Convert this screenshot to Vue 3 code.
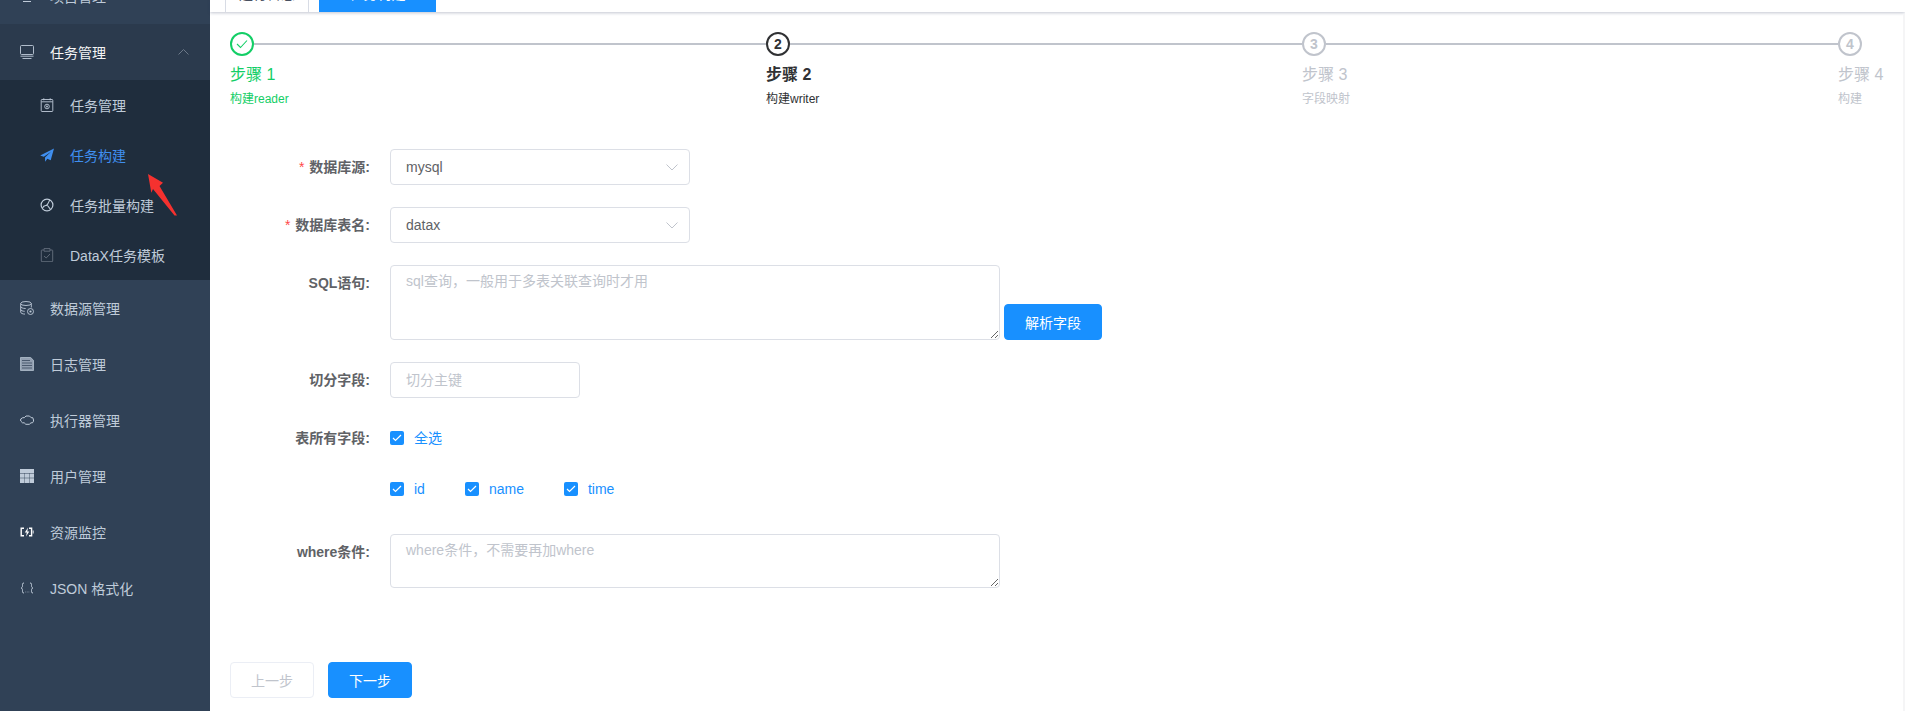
<script setup>
const steps = [
  { title: '步骤 1', desc: '构建reader', state: 'done' },
  { title: '步骤 2', desc: '构建writer', state: 'now' },
  { title: '步骤 3', desc: '字段映射', state: 'wait', n: 3 },
  { title: '步骤 4', desc: '构建', state: 'wait', n: 4 }
]
const mainMenu = [
  { name: '数据源管理', icon: 'db' },
  { name: '日志管理', icon: 'log' },
  { name: '执行器管理', icon: 'exec' },
  { name: '用户管理', icon: 'table' },
  { name: '资源监控', icon: 'battery' },
  { name: 'JSON 格式化', icon: 'json' }
]
const subMenu = [
  { name: '任务管理', icon: 'cal' },
  { name: '任务构建', icon: 'plane', active: true },
  { name: '任务批量构建', icon: 'dash' },
  { name: 'DataX任务模板', icon: 'clip' }
]
const fields = ['id', 'name', 'time']
</script>

<template>
  <div class="page">
    <aside class="side">
      <div class="item clipped">
        <svg class="ico" viewBox="0 0 14 14"><path d="M1 1h12v8H1zM3 12.500h8" fill="none" stroke="currentColor" /></svg>
        <span>项目管理</span>
      </div>
      <div class="item open">
        <svg class="ico" viewBox="0 0 14 14"><path d="M1.500 .5h11a1 1 0 0 1 1 1v7a1 1 0 0 1-1 1h-11a1 1 0 0 1-1-1v-7a1 1 0 0 1 1-1zM.5 11.200h13M2.500 13.500h9" fill="none" stroke="currentColor" stroke-width=".9" /></svg>
        <span>任务管理</span>
        <svg class="caret" viewBox="0 0 11 6"><path d="M.5 5.500l5-5 5 5" fill="none" stroke="currentColor" /></svg>
      </div>
      <div class="sub">
        <div v-for="s in subMenu" :key="s.name" class="sub-item" :class="{ active: s.active, dim: s.icon === 'clip' }">
          <svg class="ico" viewBox="0 0 14 14">
            <template v-if="s.icon === 'cal'">
              <path d="M2 1.500h10a.8.8 0 0 1 .8.8v10.400a.8.8 0 0 1-.8.8H2a.8.8 0 0 1-.8-.8V2.300a.8.8 0 0 1 .8-.8zM1.500 3.800h11M3.800 .3v2M10.200 .3v2" fill="none" stroke="currentColor" stroke-width=".9" />
              <circle cx="7" cy="8.500" r="2.300" fill="none" stroke="currentColor" stroke-width=".9" />
              <circle cx="7" cy="8.500" r=".9" fill="currentColor" />
            </template>
            <path v-else-if="s.icon === 'plane'" d="M14 .5L.2 7.500l3.600 1.300L11 3.800 5 9.500l.1 4.200 2.200-3 3.400 1.500z" fill="currentColor" />
            <template v-else-if="s.icon === 'dash'">
              <circle cx="7" cy="7" r="5.900" fill="none" stroke="currentColor" stroke-width="1.200" />
              <path d="M2.500 10C4 6.500 6 8 7 7s2-3.500 2.800-5.200M7.500 7.500l2.800 3.600" fill="none" stroke="currentColor" stroke-width="1.100" />
            </template>
            <template v-else>
              <path d="M3.800 2H2a.7.7 0 0 0-.7.7v10.300a.7.7 0 0 0 .7.7h10a.7.7 0 0 0 .7-.7V2.700A.7.7 0 0 0 12 2h-1.800M4 .6h6v2.600H4zM4 8l2.200 2 3.800-4" fill="none" stroke="currentColor" stroke-width=".9" />
            </template>
          </svg>
          <span>{{ s.name }}</span>
        </div>
      </div>
      <div v-for="m in mainMenu" :key="m.name" class="item">
        <svg class="ico" :class="{ bright: m.icon === 'battery' }" viewBox="0 0 14 14">
          <template v-if="m.icon === 'db'">
            <ellipse cx="6" cy="2.500" rx="5.300" ry="2" fill="none" stroke="currentColor" stroke-width=".9" />
            <path d="M.7 2.500v8.700c0 1 2 1.900 4.300 1.900M.7 5.500c0 1 2 2 5 2M.7 8.500c0 1 2 1.800 4 1.800M11.300 2.500v4" fill="none" stroke="currentColor" stroke-width=".9" />
            <circle cx="10.500" cy="10.500" r="3" fill="none" stroke="currentColor" stroke-width=".9" />
            <circle cx="10.500" cy="10.500" r="1.100" fill="currentColor" />
          </template>
          <template v-else-if="m.icon === 'log'">
            <path d="M.5 .5h10.200l2.800 2.800v10.200H.5z" fill="#93a0b2" stroke="currentColor" stroke-width=".7" />
            <path d="M2 3.500h8M2 6h10M2 8.500h10M2 11h10" stroke="#4b5a6f" fill="none" />
          </template>
          <path v-else-if="m.icon === 'exec'" d="M.7 6l2-1.300h1.600L6 3h3.500l1.600 1.700h1.700l.7 2.300v1.200l-1 1.600H11l-1.700 1.500H5.800L4.200 9.800H2.500L.7 8z" fill="none" stroke="currentColor" stroke-width="1" />
          <template v-else-if="m.icon === 'table'">
            <path d="M0 0h14v4H0z" fill="currentColor" />
            <path d="M0 4.500h4.500v4.300H0zM4.900 4.500h4.200v4.300H4.900zM9.500 4.500H14v4.300H9.500zM0 9.200h4.500V14H0zM4.900 9.200h4.200V14H4.900zM9.500 9.200H14V14H9.500z" fill="currentColor" />
          </template>
          <template v-else-if="m.icon === 'battery'">
            <path d="M4 3.300H1.200v7.400H4M9 3.300h2.600v7.400H9" fill="none" stroke="currentColor" stroke-width="1.400" />
            <path d="M12.600 5.500H14v3h-1.400z" fill="currentColor" opacity=".6" />
            <path d="M8 2.500L4.800 7.500h2l-.8 4 3.300-5h-2z" fill="currentColor" />
          </template>
          <template v-else>
            <path d="M4 2c-2 0-1.500 1.300-1.500 2.700S2 6.800 1 7c1 .2 1.500 1 1.500 2.300S2 12 4 12M10 2c2 0 1.500 1.300 1.500 2.700s.5 2.100 1.500 2.300c-1 .2-1.500 1-1.500 2.300s-.5 2.700 1.500 2.700" fill="none" stroke="currentColor" />
            <path d="M5.200 11h.9M6.800 11h.9M8.400 11h.9" stroke="currentColor" opacity=".5" />
          </template>
        </svg>
        <span>{{ m.name }}</span>
      </div>
    </aside>

    <main class="main">
      <div class="tags">
        <span class="tag">运行日志</span>
        <span class="tag on">任务构建</span>
      </div>

      <div class="content">
        <div class="steps">
          <div v-for="s in steps" :key="s.title" class="step" :class="s.state">
            <div class="head">
              <span class="dot">
                <svg v-if="s.state === 'done'" class="tick" viewBox="0 0 12 10"><path d="M1 5l3.500 3.500L11 1.500" fill="none" stroke="currentColor" stroke-width="1.100" /></svg>
                <template v-else>{{ s.n || 2 }}</template>
              </span>
              <span class="line"></span>
            </div>
            <div class="title">{{ s.title }}</div>
            <div class="desc">{{ s.desc }}</div>
          </div>
        </div>

        <form class="form" @submit.prevent>
          <div class="row">
            <label class="lab"><i>*</i>数据库源:</label>
            <div class="select">mysql<svg viewBox="0 0 12 7"><path d="M.5 .5L6 6l5.500-5.500" fill="none" stroke="currentColor" /></svg></div>
          </div>
          <div class="row">
            <label class="lab"><i>*</i>数据库表名:</label>
            <div class="select">datax<svg viewBox="0 0 12 7"><path d="M.5 .5L6 6l5.500-5.500" fill="none" stroke="currentColor" /></svg></div>
          </div>
          <div class="row bottom">
            <label class="lab top">SQL语句:</label>
            <textarea class="area sql" placeholder="sql查询，一般用于多表关联查询时才用"></textarea>
            <button type="button" class="btn primary parse">解析字段</button>
          </div>
          <div class="row">
            <label class="lab">切分字段:</label>
            <input class="input" placeholder="切分主键" />
          </div>
          <div class="row check-row">
            <label class="lab">表所有字段:</label>
            <span class="check"><b><svg viewBox="0 0 10 8"><path d="M1 4l2.500 2.500L9 1" fill="none" stroke="#fff" stroke-width="1.200" /></svg></b>全选</span>
          </div>
          <div class="row group">
            <span v-for="f in fields" :key="f" class="check"><b><svg viewBox="0 0 10 8"><path d="M1 4l2.500 2.500L9 1" fill="none" stroke="#fff" stroke-width="1.200" /></svg></b>{{ f }}</span>
          </div>
          <div class="row where">
            <label class="lab top">where条件:</label>
            <textarea class="area whe" placeholder="where条件，不需要再加where"></textarea>
          </div>
        </form>

        <div class="actions">
          <button type="button" class="btn off">上一步</button>
          <button type="button" class="btn primary">下一步</button>
        </div>
      </div>
    </main>

    <svg class="arrow" viewBox="0 0 29 42"><path d="M0 0L15 8.700 11.500 12 29 41.500 26.500 41.500 5 15 3.300 18.700z" fill="#f5312f" /></svg>
    <span class="edge"></span>
  </div>
</template>

<style scoped>
.page {
  display: flex;
  width: 1905px;
  height: 711px;
  overflow: hidden;
  position: relative;
  font-family: "Liberation Sans", "Noto Sans CJK SC", sans-serif;
  font-size: 14px;
  background: #fff;
}
.side {
  width: 210px;
  flex: none;
  background: #304156;
  color: #bfcbd9;
}
.item {
  height: 56px;
  display: flex;
  align-items: center;
  padding-left: 20px;
  position: relative;
}
.item .ico,
.sub-item .ico {
  width: 14px;
  height: 14px;
  margin-right: 16px;
  flex: none;
}
.item .ico.bright {
  color: #fff;
}
.clipped {
  margin-top: -32px;
}
.open {
  background: #2b3a4d;
  color: #f4f4f5;
}
.open .ico {
  color: #bfcbd9;
}
.caret {
  position: absolute;
  right: 21px;
  top: 25px;
  width: 11px;
  height: 6px;
  color: #6c7888;
}
.sub {
  background: #1f2d3d;
}
.sub-item {
  height: 50px;
  display: flex;
  align-items: center;
  padding-left: 40px;
}
.sub-item.dim .ico {
  color: #66717f;
}
.sub-item.active {
  color: #3f8ff0;
}
.main {
  flex: 1;
  min-width: 0;
  display: flex;
  flex-direction: column;
}
.tags {
  height: 12px;
  flex: none;
  display: flex;
  align-items: flex-end;
  padding-left: 15px;
  gap: 10px;
  box-shadow: 0 1px 3px rgba(40, 50, 90, 0.28);
  overflow: hidden;
}
.tag {
  box-sizing: border-box;
  width: 84px;
  height: 36px;
  border: 1px solid #d8dce5;
  border-bottom: 0;
  color: #495060;
  font-size: 14px;
  line-height: 34px;
  text-align: center;
  flex: none;
}
.tag.on {
  width: 117px;
  background: #1890ff;
  border-color: #1890ff;
  color: #fff;
}
.content {
  padding: 20px 20px 0;
  flex: 1;
}
.steps {
  display: flex;
  width: 1655px;
}
.step {
  flex: 0 0 536px;
  color: #c0c4cc;
}
.step:last-child {
  flex: 0 0 auto;
}
.step.done {
  color: #13ce66;
}
.step.now {
  color: #303133;
}
.head {
  display: flex;
  align-items: center;
  height: 24px;
}
.dot {
  box-sizing: border-box;
  width: 24px;
  height: 24px;
  border: 2px solid currentColor;
  border-radius: 50%;
  flex: none;
  display: flex;
  align-items: center;
  justify-content: center;
  font-size: 14px;
  font-weight: 700;
  line-height: 1;
}
.tick {
  width: 12px;
  height: 10px;
}
.line {
  flex: 1;
  height: 2px;
  background: #c0c4cc;
}
.step:last-child .line {
  display: none;
}
.title {
  margin-top: 7px;
  font-size: 16px;
  line-height: 24px;
}
.now .title {
  font-weight: 700;
}
.desc {
  margin-top: 2px;
  font-size: 12px;
  line-height: 20px;
}
.form {
  margin-top: 40px;
}
.row {
  display: flex;
  align-items: center;
  margin-bottom: 22px;
  color: #606266;
}
.row.bottom {
  align-items: flex-end;
}
.lab {
  box-sizing: border-box;
  width: 160px;
  padding-right: 20px;
  text-align: right;
  font-weight: 700;
  line-height: 36px;
  flex: none;
  align-self: flex-start;
  color: #606266;
  white-space: nowrap;
}
.lab i {
  color: #ff4949;
  font-style: normal;
  font-weight: 400;
  margin-right: 5px;
}
.select {
  box-sizing: border-box;
  width: 300px;
  height: 36px;
  border: 1px solid #dcdfe6;
  border-radius: 4px;
  padding-left: 15px;
  line-height: 34px;
  position: relative;
}
.select svg {
  position: absolute;
  right: 11px;
  top: 14px;
  width: 12px;
  height: 7px;
  color: #c0c4cc;
}
.area,
.input {
  box-sizing: border-box;
  border: 1px solid #dcdfe6;
  border-radius: 4px;
  padding: 5px 15px;
  font: inherit;
  color: #606266;
  outline: 0;
  display: block;
  background: #fff;
}
.area {
  width: 610px;
  line-height: 20px;
}
.sql {
  height: 75px;
}
.whe {
  height: 54px;
}
.input {
  width: 190px;
  height: 36px;
}
.area::placeholder,
.input::placeholder {
  color: #c0c4cc;
  opacity: 1;
}
.btn {
  box-sizing: border-box;
  height: 36px;
  width: 84px;
  border-radius: 4px;
  border: 1px solid #1890ff;
  background: #1890ff;
  color: #fff;
  font: inherit;
  padding: 0;
  flex: none;
}
.parse {
  width: 98px;
  margin-left: 4px;
}
.btn.off {
  background: #fff;
  border-color: #ebeef5;
  color: #c0c4cc;
}
.check {
  display: inline-flex;
  align-items: center;
  color: #1890ff;
  line-height: 36px;
}
.check b {
  width: 14px;
  height: 14px;
  border-radius: 2px;
  background: #1890ff;
  margin-right: 10px;
  display: flex;
  align-items: center;
  justify-content: center;
}
.check svg {
  width: 10px;
  height: 8px;
}
.check-row {
  margin-bottom: 15px;
}
.group {
  padding-left: 160px;
  margin-bottom: 27px;
  gap: 40px;
}
.where {
  margin-bottom: 0;
}
.actions {
  display: flex;
  gap: 14px;
  margin-top: 74px;
}
.arrow {
  position: absolute;
  left: 148px;
  top: 174px;
  width: 29px;
  height: 42px;
}
.edge {
  position: absolute;
  right: 0;
  top: 14px;
  bottom: 0;
  width: 2px;
  background: #f5f5f6;
}
</style>

<style>
html, body { margin: 0; }
</style>
